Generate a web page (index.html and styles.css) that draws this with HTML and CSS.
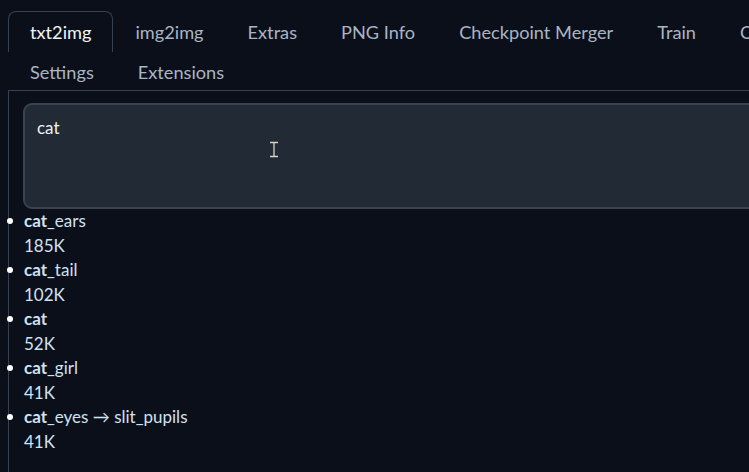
FILE: index.html
```html
<!DOCTYPE html>
<html lang="en">

<head>
    <meta charset="utf-8">
    <meta name="viewport" content="width=device-width, initial-scale=1.0">
    <title>txt2img</title>
    <link rel="stylesheet" href="styles.css">
</head>

<body>

    <nav class="tabs">
        <button class="tab valgt">txt2img</button>
        <button class="tab">img2img</button>
        <button class="tab">Extras</button>
        <button class="tab">PNG Info</button>
        <button class="tab">Checkpoint Merger</button>
        <button class="tab">Train</button>
        <button class="tab">Create</button>
        <button class="tab">Settings</button>
        <button class="tab">Extensions</button>
    </nav>

    <section class="panel">
        <div class="prompt">
            <span class="prompt-text">cat</span>
            <svg class="ibeam" width="10" height="17" viewBox="0 0 10 17">
                <path d="M1 1.5h8M5 1.5v14M1 15.5h8" stroke="#d9d2c4" stroke-width="1.3" fill="none" />
            </svg>
        </div>

        <ul class="forslag">
            <li><b>cat</b>_ears<span class="antal">185K</span></li>
            <li><b>cat</b>_tail<span class="antal">102K</span></li>
            <li><b>cat</b><span class="antal">52K</span></li>
            <li><b>cat</b>_girl<span class="antal">41K</span></li>
            <li><b>cat</b>_eyes → slit_pupils<span class="antal">41K</span></li>
        </ul>
    </section>

</body>

</html>
```

FILE: styles.css
```css
* {
    box-sizing: border-box;
    padding: 0;
    margin: 0;
}

body {
    background: #0b0f19;
    font-family: "Lato", "Noto Sans", sans-serif;
    overflow: hidden;
    width: 749px;
    height: 472px;
}

.tabs {
    display: flex;
    flex-wrap: wrap;
    width: 880px;
    padding: 11px 0 0 8px;
}

.tab {
    background: none;
    border: 1px solid transparent;
    border-bottom: none;
    border-radius: 8px 8px 0 0;
    color: #a9b5c4;
    font-family: inherit;
    font-size: 18.2px;
    height: 41px;
    padding: 0 21px;
    white-space: nowrap;
}

.tab:nth-child(n+8) {
    height: 38px;
}

.valgt {
    border-color: #374151;
    color: #f3f4f6;
}

.panel {
    border-top: 1px solid #374151;
    border-left: 1px solid #374151;
    margin-left: 8px;
    width: 800px;
    height: 400px;
    padding: 12px 0 0 14px;
}

.prompt {
    position: relative;
    background: #222a36;
    border: 2px solid #3a4350;
    border-radius: 9px;
    height: 106px;
    padding: 12px 12px;
}

.prompt-text {
    color: #eef1f5;
    font-size: 17px;
}

.ibeam {
    position: absolute;
    left: 244px;
    top: 36px;
}

.forslag {
    list-style: none;
    margin-left: 1px;
    color: #cfe2f3;
    font-size: 17px;
    line-height: 24.5px;
}

.forslag li {
    position: relative;
}

.forslag li::before {
    content: "";
    position: absolute;
    left: -17px;
    top: 9px;
    width: 6px;
    height: 6px;
    border-radius: 50%;
    background: #ffffff;
}

.forslag b {
    font-weight: 700;
}

.antal {
    display: block;
}
```
